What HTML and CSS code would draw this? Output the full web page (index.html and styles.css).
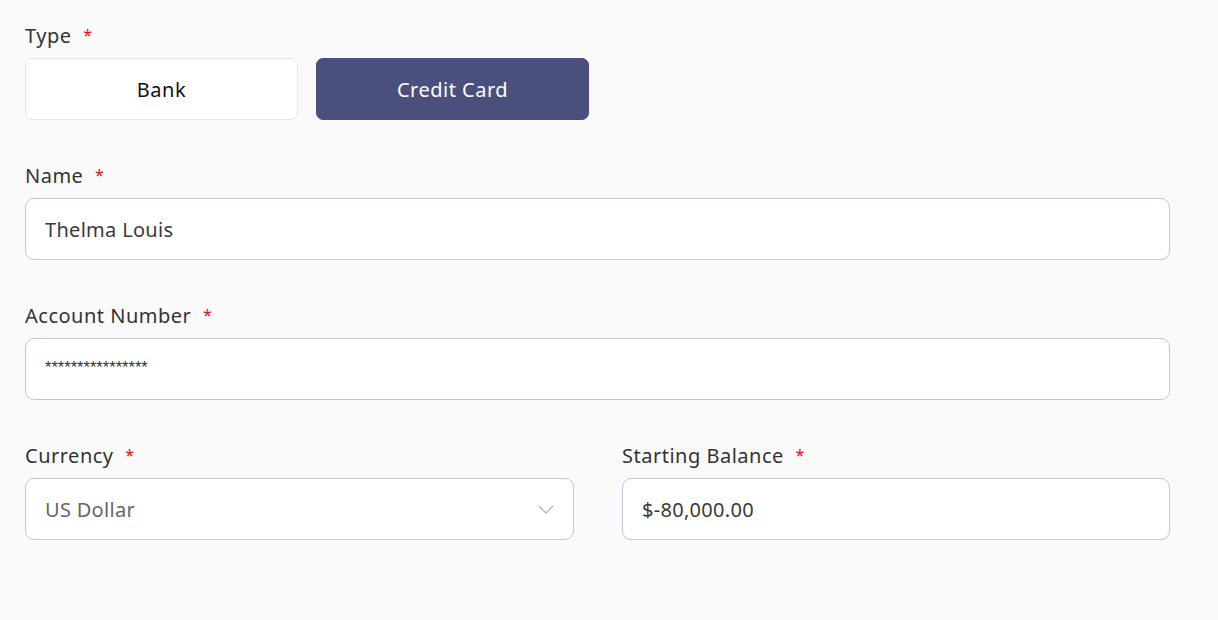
FILE: index.html
```html
<!DOCTYPE html>
<html lang="en">
<head>
<meta charset="utf-8">
<title>Account form</title>
<link rel="stylesheet" href="styles.css">
</head>
<body>
<form class="form">
  <div class="field">
    <div class="label">Type <span class="req">*</span></div>
    <div class="type-row">
      <button type="button" class="type-btn">Bank</button>
      <button type="button" class="type-btn active">Credit Card</button>
    </div>
  </div>
  <div class="field">
    <div class="label">Name <span class="req">*</span></div>
    <div class="input">Thelma Louis</div>
  </div>
  <div class="field">
    <div class="label">Account Number <span class="req">*</span></div>
    <div class="input masked">****************</div>
  </div>
  <div class="row">
    <div class="field">
      <div class="label">Currency <span class="req">*</span></div>
      <div class="input select">
        <span class="muted">US Dollar</span>
        <svg class="chev" width="16" height="9" viewBox="0 0 16 9"><path d="M1 1 L8 8 L15 1" fill="none" stroke="#b4b4c4" stroke-width="1.3"/></svg>
      </div>
    </div>
    <div class="field">
      <div class="label">Starting Balance <span class="req">*</span></div>
      <div class="input">$-80,000.00</div>
    </div>
  </div>
</form>
</body>
</html>
```
FILE: styles.css
```css
html, body {
  margin: 0;
  padding: 0;
  background: #fafafa;
}
body {
  font-family: "Noto Sans", "Open Sans", sans-serif;
  color: #333;
}
.form {
  width: 1145px;
  padding: 24px 0 0 25px;
  display: flex;
  flex-direction: column;
  gap: 44px;
}
.field {
  display: flex;
  flex-direction: column;
  gap: 10px;
}
.label {
  font-size: 20px;
  line-height: 24px;
  height: 24px;
  color: #333;
  font-weight: 400;
  letter-spacing: 0.5px;
}
.req {
  color: #e0101e;
  font-size: 16px;
  margin-left: 6px;
  position: relative;
  top: -2px;
}
.type-row {
  display: flex;
  gap: 18px;
}
.type-btn {
  width: 273px;
  height: 62px;
  border: 1px solid #e6e6e6;
  border-radius: 7px;
  background: #fff;
  font-family: inherit;
  font-size: 20px;
  font-weight: 400;
  letter-spacing: 0.5px;
  color: #111;
  cursor: pointer;
}
.type-btn.active {
  background: #4b4f7e;
  border-color: #4b4f7e;
  color: #fff;
}
.input {
  box-sizing: border-box;
  height: 62px;
  border: 1px solid #c6c4d8;
  border-radius: 9px;
  background: #fff;
  padding: 0 19px;
  display: flex;
  align-items: center;
  font-size: 20px;
  letter-spacing: 0.3px;
  color: #3a3a3a;
}
.masked {
  font-family: "Liberation Sans", sans-serif;
  font-size: 16.5px;
  letter-spacing: 0;
  color: #333;
  padding-bottom: 4px;
}
.row {
  display: grid;
  grid-template-columns: 549px 548px;
  gap: 48px;
}
.select {
  justify-content: space-between;
}
.muted {
  color: #666;
}
```
